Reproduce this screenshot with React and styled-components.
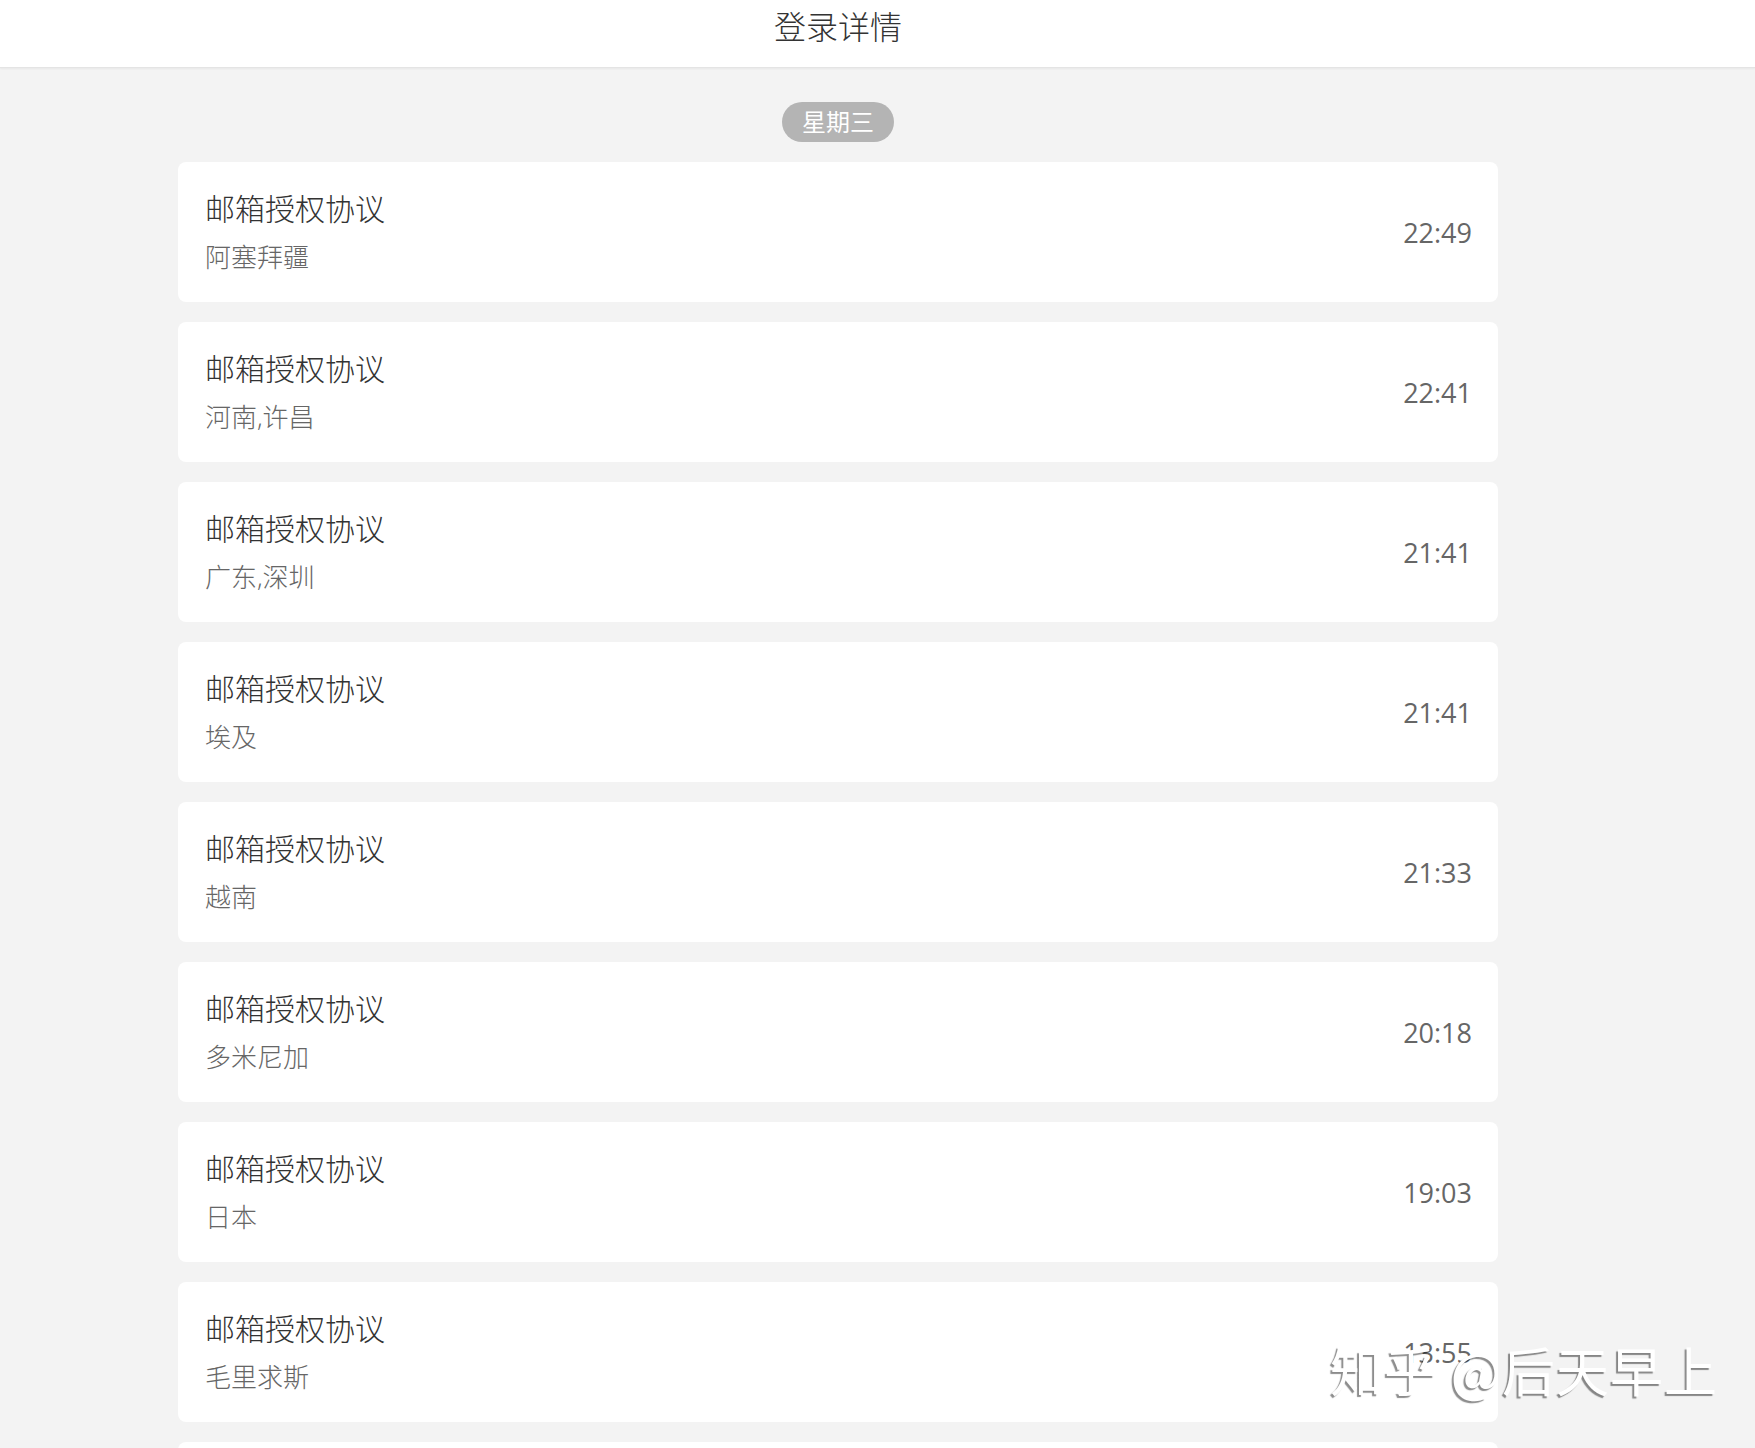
import React from 'react';
import styled, { createGlobalStyle } from 'styled-components';

const records = [
  { place: '阿塞拜疆', time: '22:49' },
  { place: '河南,许昌', time: '22:41' },
  { place: '广东,深圳', time: '21:41' },
  { place: '埃及', time: '21:41' },
  { place: '越南', time: '21:33' },
  { place: '多米尼加', time: '20:18' },
  { place: '日本', time: '19:03' },
  { place: '毛里求斯', time: '13:55' },
  { place: '美国', time: '12:20' },
];

const LoginDetail = () => {
  return (
    <Page>
      <GlobalStyle />
      <Header>
        <HeaderTitle>登录详情</HeaderTitle>
      </Header>
      <Content>
        <DayTag>星期三</DayTag>
        <List>
          {records.map((item, i) => (
            <Card key={i}>
              <Info>
                <Title>邮箱授权协议</Title>
                <Place>{item.place}</Place>
              </Info>
              <Time>{item.time}</Time>
            </Card>
          ))}
        </List>
      </Content>
      <Watermark>知乎 @后天早上</Watermark>
    </Page>
  );
};

export default LoginDetail;

const GlobalStyle = createGlobalStyle`
  html, body {
    margin: 0;
    padding: 0;
    background: #f3f3f3;
    overflow: hidden;
  }
  body {
    font-family: "Open Sans", "Noto Sans CJK SC", sans-serif;
  }
`;

const Page = styled.div`
  height: 1448px;
  overflow: hidden;
  background: #f3f3f3;
`;

const Header = styled.div`
  height: 68px;
  box-sizing: border-box;
  padding: 8px 79px 0 0;
  background: #fff;
  border-bottom: 1px solid #e4e4e4;
  box-shadow: 0 1px 2px rgba(0, 0, 0, 0.05);
  display: flex;
  justify-content: center;
`;

const HeaderTitle = styled.h1`
  margin: 0;
  font-size: 32px;
  line-height: 38px;
  font-weight: 300;
  color: #333;
`;

const Content = styled.div`
  padding: 34px 79px 0 0;
  display: flex;
  flex-direction: column;
  align-items: center;
`;

const DayTag = styled.div`
  height: 40px;
  padding: 0 20px;
  border-radius: 20px;
  background: #b4b4b4;
  color: #fff;
  font-size: 24px;
  line-height: 40px;
`;

const List = styled.div`
  margin-top: 20px;
  width: 1320px;
  display: flex;
  flex-direction: column;
  gap: 20px;
`;

const Card = styled.div`
  height: 140px;
  flex-shrink: 0;
  box-sizing: border-box;
  padding: 0 26px 0 27px;
  background: #fff;
  border-radius: 8px;
  display: flex;
  align-items: center;
  justify-content: space-between;
`;

const Info = styled.div`
  display: flex;
  flex-direction: column;
`;

const Title = styled.div`
  font-size: 30px;
  line-height: 36px;
  font-weight: 300;
  color: #333;
`;

const Place = styled.div`
  margin-top: 14px;
  font-size: 26px;
  line-height: 32px;
  font-weight: 300;
  color: #666;
`;

const Time = styled.div`
  font-size: 27px;
  color: #666;
`;

const Watermark = styled.div`
  position: fixed;
  left: 1330px;
  top: 1336px;
  font-family: "Noto Sans CJK SC", sans-serif;
  font-size: 53px;
  line-height: 66px;
  font-weight: 400;
  color: #fff;
  letter-spacing: 1px;
  text-shadow: -2px 2px 1px rgba(0, 0, 0, 0.45);
  white-space: nowrap;
`;
